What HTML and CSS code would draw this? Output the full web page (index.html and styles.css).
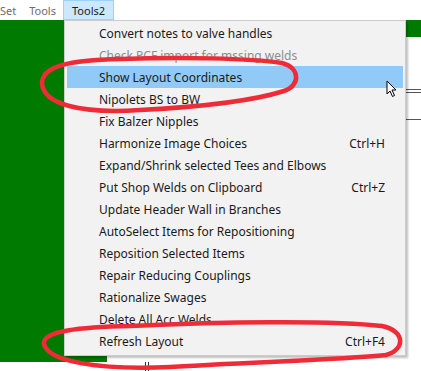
FILE: index.html
```html
<!DOCTYPE html>
<html lang="en">
<head>
  <meta charset="UTF-8">
  <title>Tools2 menu</title>
  <link rel="stylesheet" href="styles.css">
</head>
<body>
  <div class="menubar">
    <span class="top-item first">Set</span>
    <span class="top-item">Tools</span>
    <span class="top-item open">Tools2</span>
  </div>

  <div class="workspace">
    <div class="side-panel"></div>
    <div class="content">
      <div class="header-strip"></div>
      <div class="grid-lines">
        <div class="rule double"></div>
        <div class="rule single"></div>
      </div>
    </div>
  </div>
  <div class="footer">
    <div class="footer-box"><span class="bar"></span></div>
  </div>

  <!-- dropdown lies over the workspace -->
  <ul class="dropdown">
    <li>Convert notes to valve handles</li>
    <li class="disabled">Check PCF import for mssing welds</li>
    <li class="hot">Show Layout Coordinates</li>
    <li>Nipolets BS to BW</li>
    <li>Fix Balzer Nipples</li>
    <li>Harmonize Image Choices<span class="key">Ctrl+H</span></li>
    <li>Expand/Shrink selected Tees and Elbows</li>
    <li>Put Shop Welds on Clipboard<span class="key">Ctrl+Z</span></li>
    <li>Update Header Wall in Branches</li>
    <li>AutoSelect Items for Repositioning</li>
    <li>Reposition Selected Items</li>
    <li>Repair Reducing Couplings</li>
    <li>Rationalize Swages</li>
    <li>Delete All Acc Welds</li>
    <li>Refresh Layout<span class="key">Ctrl+F4</span></li>
  </ul>

  <svg class="cursor" width="12" height="18" viewBox="0 0 12 18">
    <path d="M1 1 L1 14 L4 11 L6.5 16.5 L8.5 15.5 L6 10 L10 10 Z" fill="#fff" stroke="#000" stroke-width="1"/>
  </svg>

  <!-- hand drawn annotations -->
  <svg class="marks" width="421" height="371" viewBox="0 0 421 371">
    <path d="M120 59 C 180 57, 250 58, 282 63 C 301 68, 300 86, 284 91 C 262 98, 218 106, 140 110 C 80 114, 44 104, 42 84 C 41 66, 70 60, 120 59 Z"
          fill="none" stroke="#ee2b36" stroke-width="4.5" stroke-linecap="round"/>
    <path d="M130 326 C 220 322, 330 320, 382 326 C 406 331, 405 350, 386 355 C 340 360, 250 362, 170 367 C 100 370, 48 362, 44 344 C 42 331, 80 327, 130 326 Z"
          fill="none" stroke="#ee2b36" stroke-width="4.5" stroke-linecap="round"/>
  </svg>
</body>
</html>
```

FILE: styles.css
```css
body {
  margin: 0;
  width: 421px;
  height: 371px;
  overflow: hidden;
  background: #fff;
  font-family: 'Noto Sans', 'Open Sans', sans-serif;
  font-size: 12px;
  color: #1a1a1a;
  position: relative;
}
.menubar {
  display: flex;
  height: 20px;
  align-items: stretch;
  background: #fff;
  font-size: 11px;
}
.top-item {
  display: flex;
  align-items: center;
  padding: 0 6px;
  color: #6d6d6d;
  border: 1px solid transparent;
}
.top-item.first {
  padding: 0 5px 0 0;
  margin-left: -1px;
}
.top-item.open {
  color: #1a1a1a;
  background: #cce8ff;
  border-color: #99d1ff;
  padding: 0 8px;
}
.workspace {
  display: flex;
  height: 342px;
}
.side-panel {
  width: 107px;
  background: #007a00;
}
.content {
  flex: 1;
  display: flex;
  flex-direction: column;
}
.header-strip {
  height: 17px;
  background: #007a00;
}
.grid-lines {
  flex: 1;
  padding-top: 52px;
}
.rule.double {
  height: 2px;
  border-top: 1px solid #555;
  border-bottom: 1px solid #555;
  margin-bottom: 26px;
}
.rule.single {
  border-top: 1px solid #555;
}
.footer {
  padding-left: 107px;
}
.footer-box {
  height: 9px;
  padding-left: 38px;
}
.bar {
  display: block;
  width: 2px;
  height: 9px;
  border-left: 1px solid #333;
  border-right: 1px solid #333;
}
.dropdown {
  position: absolute;
  left: 64px;
  top: 20px;
  width: 336px;
  margin: 0;
  padding: 1px 2px 3px;
  list-style: none;
  background: #f2f2f2;
  border: 1px solid #cccccc;
  box-shadow: 2px 2px 2px rgba(0, 0, 0, 0.25);
}
.dropdown li {
  display: flex;
  justify-content: space-between;
  align-items: center;
  height: 22px;
  padding: 0 18px 0 32px;
  white-space: nowrap;
}
.dropdown li.disabled {
  color: #8d8d8d;
}
.dropdown li.hot {
  background: #91c9f7;
}
.key {
  color: #1a1a1a;
}
.cursor {
  position: absolute;
  left: 386px;
  top: 80px;
}
.marks {
  position: absolute;
  left: 0;
  top: 0;
  pointer-events: none;
}
```
